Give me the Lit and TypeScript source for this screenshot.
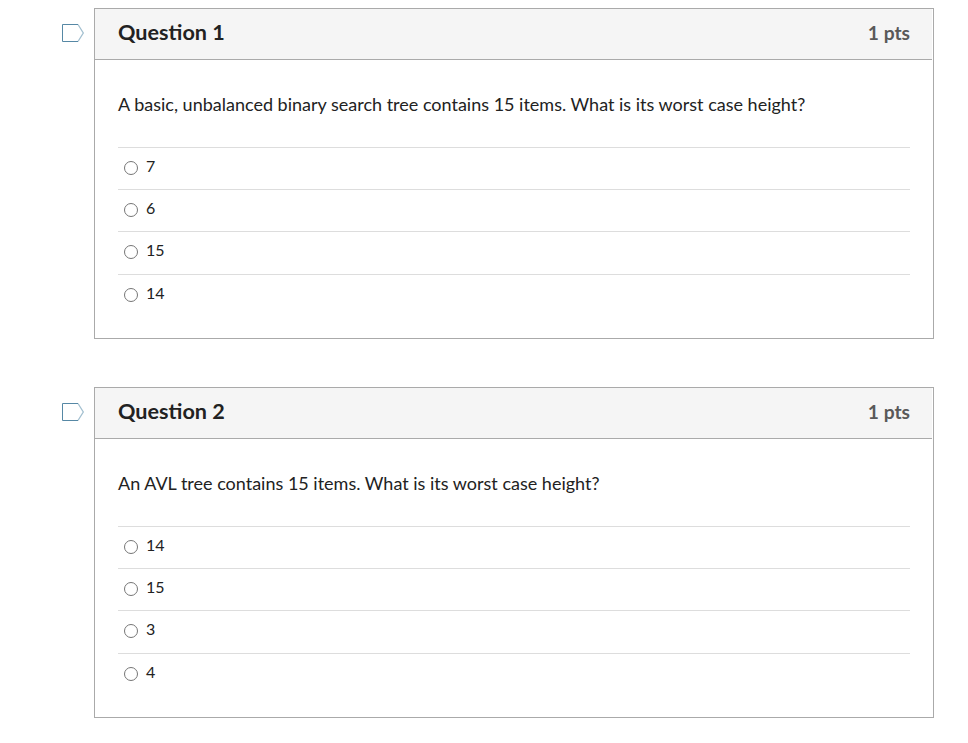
import { LitElement, html, css } from "lit";

class QuizQuestion extends LitElement {
  static properties = {
    name: { type: String },
    prompt: { type: String },
    answers: { attribute: false },
  };
  declare name: string;
  declare prompt: string;
  declare answers: string[];

  static styles = css`
    :host { display: flex; align-items: flex-start; }
    .flag { width: 24px; height: 20px; margin: 15px 9px 0 0; flex: none; display: block; }
    .card { box-sizing: border-box; width: 840px; height: 331px; border: 1px solid #aaa; background: #fff; }
    .header { box-sizing: border-box; display: flex; justify-content: space-between; height: 51px; margin-right: 1px; padding: 0 22px 0 23px; background: #f5f5f5; border-bottom: 1px solid #aaa; font-weight: 700; line-height: 46px; }
    .name { font-size: 21.6px; color: #222; }
    .points { font-size: 19.2px; line-height: 48px; color: #595959; }
    .body { padding: 31px 23px 0; }
    .prompt { font-size: 18px; line-height: 27px; margin-bottom: 29px; white-space: nowrap; }
    .answer { box-sizing: border-box; height: 42px; border-top: 1px solid #ddd; display: flex; align-items: flex-start; padding-left: 6px; }
    .answer:nth-of-type(3) { height: 43px; }
    .radio { appearance: none; box-sizing: border-box; width: 14px; height: 14px; border: 1px solid #767676; border-radius: 50%; margin: 13px 8px 0 0; background: #fff; }
    .label { font-size: 16px; line-height: 24px; padding-top: 6px; }
  `;

  render() {
    return html`
      <svg class="flag" viewBox="0 0 24 20" fill="none">
        <path stroke="#a3c0d0" stroke-width="1.3" d="M17 1.5L22.3 10L17 18.5" />
        <path stroke="#5688a5" d="M17 1.5H1.5V18.5H17" />
      </svg>
      <section class="card">
        <header class="header">
          <span class="name">${this.name}</span>
          <span class="points">1 pts</span>
        </header>
        <div class="body">
          <div class="prompt">${this.prompt}</div>
          ${this.answers.map((a) => html`
            <label class="answer">
              <input class="radio" type="radio" name="answer" />
              <span class="label">${a}</span>
            </label>`)}
        </div>
      </section>`;
  }
}
customElements.define("quiz-question", QuizQuestion);

class AppRoot extends LitElement {
  static styles = css`
    :host { display: block; box-sizing: border-box; height: 743px; overflow: hidden; padding: 8px 0 0 61px; background: #fff; color: #222; font-family: Lato, sans-serif; }
    .list { display: flex; flex-direction: column; gap: 48px; }
  `;
  questions = [
    { name: "Question 1", prompt: "A basic, unbalanced binary search tree contains 15 items. What is its worst case height?", answers: ["7", "6", "15", "14"] },
    { name: "Question 2", prompt: "An AVL tree contains 15 items. What is its worst case height?", answers: ["14", "15", "3", "4"] },
  ];
  render() {
    return html`<main class="list">
      ${this.questions.map((q) => html`<quiz-question .name=${q.name} .prompt=${q.prompt} .answers=${q.answers}></quiz-question>`)}
    </main>`;
  }
}
customElements.define("app-root", AppRoot);
